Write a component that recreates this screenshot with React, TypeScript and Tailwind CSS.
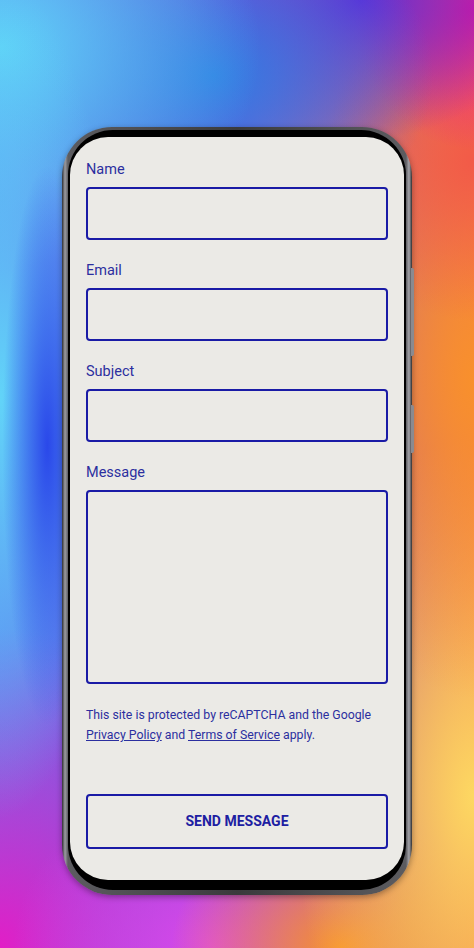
import React from "react";

type FieldProps = {
  label: string;
  tall?: boolean;
};

function Field({ label, tall }: FieldProps) {
  return (
    <div className="flex flex-col">
      <label className="text-[14.5px] leading-[18px] text-[#2b2f9f] mb-[8px]">{label}</label>
      {tall ? (
        <textarea className="h-[194px] w-full resize-none rounded-[4px] border-2 border-[#1a1ba6] bg-transparent outline-none" />
      ) : (
        <input className="h-[53px] w-full rounded-[4px] border-2 border-[#1a1ba6] bg-transparent outline-none" />
      )}
    </div>
  );
}

export default function App() {
  return (
    <div
      className="relative w-[474px] h-[948px] overflow-hidden font-['Roboto','Liberation_Sans',sans-serif]
      bg-[#c04ab0]
      bg-[radial-gradient(ellipse_45px_280px_at_10%_47%,#2a48ea_0%,transparent_100%),radial-gradient(ellipse_120px_420px_at_0%_42%,#62d4f8_0%,transparent_100%),radial-gradient(ellipse_260px_220px_at_0%_5%,#5fd3f7_0%,transparent_100%),radial-gradient(ellipse_220px_170px_at_45%_8%,#2f7ee2_0%,transparent_100%),radial-gradient(ellipse_180px_140px_at_76%_0%,#6128d6_0%,transparent_100%),radial-gradient(ellipse_120px_140px_at_100%_1%,#ea1496_0%,transparent_100%),radial-gradient(ellipse_150px_160px_at_100%_17%,#f25a48_0%,transparent_100%),radial-gradient(ellipse_160px_320px_at_100%_40%,#f8902c_0%,transparent_100%),radial-gradient(ellipse_180px_360px_at_100%_84%,#fdd862_0%,transparent_100%),radial-gradient(ellipse_170px_130px_at_72%_100%,#f7922c_0%,transparent_100%),radial-gradient(ellipse_200px_170px_at_45%_100%,#dc48ec_0%,transparent_100%),radial-gradient(ellipse_260px_320px_at_0%_100%,#e21ec6_0%,transparent_100%),linear-gradient(90deg,#5a7cf0_0%,#8050d8_50%,#f07a50_100%)]"
    >
      {/* phone frame */}
      <div className="absolute left-[62px] top-[127px] w-[350px] h-[768px] rounded-[50px] bg-[linear-gradient(90deg,#2e2e30_0px,#9c9ca2_3px,#5c5c60_6px,#3a3a3c_50%,#5c5c60_344px,#a4a4aa_347px,#2e2e30_350px)] pt-[3px] px-[6px] pb-[5px] shadow-[0_2px_6px_rgba(0,0,0,0.35)]">
        <div className="h-full w-full rounded-[45px] bg-black pt-[7px] px-[2px] pb-[10px]">
          <div className="h-full w-full rounded-[38px] bg-[#ebeae6] px-[16px] pt-[24px] flex flex-col">
            <div className="flex flex-col gap-[22px]">
              <Field label="Name" />
              <Field label="Email" />
              <Field label="Subject" />
              <Field label="Message" tall />
            </div>
            <p className="mt-[21px] text-[12.3px] leading-[20px] text-[#2b2f9f]">
              This site is protected by reCAPTCHA and the Google{" "}
              <a className="underline">Privacy Policy</a> and{" "}
              <a className="underline">Terms of Service</a> apply.
            </p>
            <button className="mt-[49px] h-[55px] w-full rounded-[4px] border-2 border-[#1a1ba6] text-[14px] font-bold text-[#1d20a2] uppercase">
              Send Message
            </button>
          </div>
        </div>
      </div>
      {/* side buttons */}
      <div className="absolute left-[411px] top-[268px] w-[3px] h-[88px] rounded-r-[2px] bg-[#8a8a90]" />
      <div className="absolute left-[411px] top-[405px] w-[3px] h-[48px] rounded-r-[2px] bg-[#8a8a90]" />
    </div>
  );
}
